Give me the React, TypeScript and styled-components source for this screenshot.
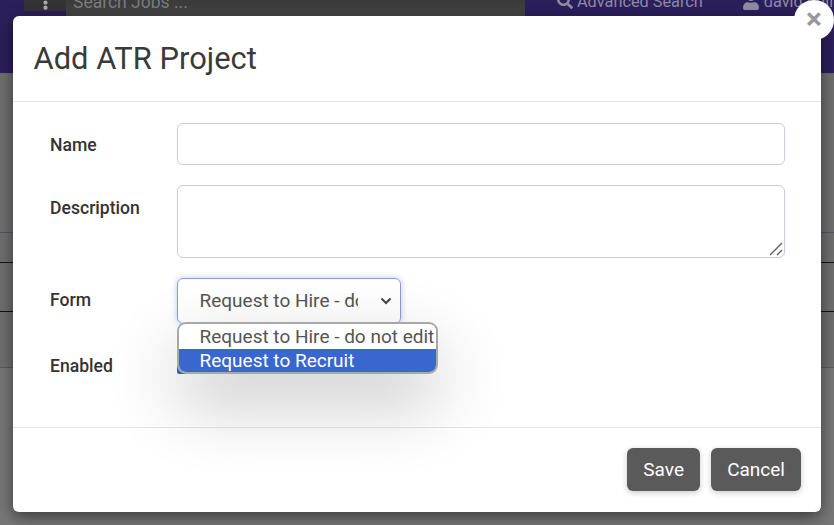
import styled, { createGlobalStyle } from 'styled-components';
import { FaSearch, FaUser, FaEllipsisV } from 'react-icons/fa';

const GlobalStyle = createGlobalStyle`
  html, body {
    margin: 0;
    padding: 0;
    height: 100%;
    overflow: hidden;
    font-family: Roboto, 'Liberation Sans', sans-serif;
  }
`;

function App() {
  return (
    <Page>
      <GlobalStyle />
      <TopBar>
        <MenuButton>
          <FaEllipsisV size={15} />
        </MenuButton>
        <SearchBox>Search Jobs ...</SearchBox>
        <TopLink>
          <FaSearch size={16} /> Advanced Search
        </TopLink>
        <TopLink>
          <FaUser size={18} /> david.bull
        </TopLink>
      </TopBar>
      <BackRows>
        <BackRow $height={159} $line="#55555f" />
        <BackRow $height={29} $line="#111" />
        <BackRow $height={48} $line="#111" />
        <BackRow $height={55} $line="#5a5a5a" />
      </BackRows>

      <Modal>
        <CloseButton>×</CloseButton>
        <ModalHeader>
          <Title>Add ATR Project</Title>
        </ModalHeader>
        <ModalBody>
          <FieldRow $height={42}>
            <FieldLabel $top={12}>Name</FieldLabel>
            <TextInput />
          </FieldRow>
          <FieldRow $height={73}>
            <FieldLabel $top={13}>Description</FieldLabel>
            <TextArea>
              <ResizeGrip viewBox="0 0 14 14">
                <path d="M1 13 L13 1 M8 13 L13 8" stroke="#5f5f5f" strokeWidth="1.4" fill="none" />
              </ResizeGrip>
            </TextArea>
          </FieldRow>
          <FieldRow $height={46}>
            <FieldLabel $top={12}>Form</FieldLabel>
            <SelectBox>
              <SelectValue>Request to Hire - do not edit</SelectValue>
              <Chevron viewBox="0 0 12 8">
                <path d="M1.5 1.5 L6 6 L10.5 1.5" stroke="#444" strokeWidth="2" fill="none" />
              </Chevron>
            </SelectBox>
          </FieldRow>
          <FieldRow $height={32}>
            <FieldLabel $top={12}>Enabled</FieldLabel>
            <CheckBox />
          </FieldRow>
        </ModalBody>
        <ModalFooter>
          <ActionButton>Save</ActionButton>
          <ActionButton>Cancel</ActionButton>
        </ModalFooter>
        <OptionList>
          <Option>Request to Hire - do not edit</Option>
          <Option $selected>Request to Recruit</Option>
        </OptionList>
      </Modal>
    </Page>
  );
}

export default App;

const Page = styled.div`
  position: relative;
  width: 834px;
  height: 525px;
  overflow: hidden;
  background: #777;
`;

const TopBar = styled.div`
  display: flex;
  align-items: flex-start;
  height: 73px;
  padding-left: 24px;
  box-sizing: border-box;
  background: #2a1f5a;
  color: #8f8aa6;
  font-size: 16.3px;
`;

const MenuButton = styled.div`
  display: flex;
  justify-content: center;
  width: 42px;
  height: 16px;
  margin-top: -5px;
  background: #333;
  color: #aaa;
`;

const SearchBox = styled.div`
  width: 452px;
  height: 16px;
  padding-left: 7px;
  background: linear-gradient(#3a3a3a, #444);
  color: #7c7c7c;
  line-height: 5px;
  font-size: 17.5px;
`;

const TopLink = styled.div`
  display: flex;
  align-items: center;
  gap: 4px;
  margin-left: 32px;
  margin-top: -8px;
  height: 18px;
  white-space: nowrap;
  &:last-child {
    margin-left: 39px;
  }
`;

const BackRows = styled.div`
  background: #6e6e6e;
`;

const BackRow = styled.div<{ $height: number; $line: string }>`
  height: ${(p) => p.$height}px;
  border-bottom: 1px solid ${(p) => p.$line};
  background: #6e6e6e;
`;

const Modal = styled.div`
  position: absolute;
  left: 13px;
  top: 16px;
  width: 808px;
  height: 496px;
  display: flex;
  flex-direction: column;
  background: #fff;
  border-radius: 6px;
  box-shadow: 0 5px 15px rgba(0, 0, 0, 0.5);
`;

const CloseButton = styled.div`
  position: absolute;
  right: -13px;
  top: -16px;
  width: 40px;
  height: 40px;
  border-radius: 50%;
  background: #fff;
  color: #999;
  font-size: 30px;
  font-weight: 700;
  line-height: 38px;
  text-align: center;
`;

const ModalHeader = styled.div`
  height: 86px;
  padding: 0 20.5px;
  box-sizing: border-box;
  border-bottom: 1px solid #e5e5e5;
`;

const Title = styled.h4`
  margin: 0;
  padding-top: 25px;
  color: #3a3a3a;
  font-size: 30.9px;
  font-weight: 400;
  line-height: 36px;
`;

const ModalBody = styled.div`
  flex: 1;
  display: flex;
  flex-direction: column;
  gap: 20px;
  padding: 21px 36px 0 37px;
`;

const FieldRow = styled.div<{ $height: number }>`
  display: flex;
  height: ${(p) => p.$height}px;
`;

const FieldLabel = styled.label<{ $top: number }>`
  width: 127px;
  padding-top: ${(p) => p.$top}px;
  color: #333;
  font-size: 17.6px;
  font-weight: 500;
  line-height: 20px;
`;

const TextInput = styled.div`
  flex: 1;
  box-sizing: border-box;
  border: 1px solid #c9c9e4;
  border-radius: 6px;
`;

const TextArea = styled(TextInput)`
  position: relative;
`;

const ResizeGrip = styled.svg`
  position: absolute;
  right: 1px;
  bottom: 1px;
  width: 14px;
  height: 14px;
`;

const SelectBox = styled.div`
  display: flex;
  align-items: center;
  width: 224px;
  height: 46px;
  box-sizing: border-box;
  padding: 0 8px 0 21.5px;
  border: 1px solid #8c9be0;
  border-radius: 6px;
  box-shadow: 0 0 6px rgba(90, 120, 230, 0.4);
`;

const SelectValue = styled.div`
  width: 158px;
  overflow: hidden;
  white-space: nowrap;
  color: #555;
  font-size: 19px;
  line-height: 22px;
`;

const Chevron = styled.svg`
  width: 12px;
  height: 8px;
  margin-left: auto;
`;

const CheckBox = styled.div`
  width: 17px;
  height: 18px;
  margin-top: 12px;
  background: #3a66d0;
  border-radius: 2px;
`;

const ModalFooter = styled.div`
  display: flex;
  justify-content: flex-end;
  gap: 11px;
  height: 85px;
  box-sizing: border-box;
  padding: 20px 20px 0;
  border-top: 1px solid #e5e5e5;
`;

const ActionButton = styled.button`
  min-width: 73px;
  height: 43px;
  padding: 0 16px;
  border: 0;
  border-radius: 6px;
  background: #5a5a5a;
  color: #fff;
  font-family: inherit;
  font-size: 19px;
  box-shadow: 0 2px 6px rgba(0, 0, 0, 0.2);
`;

const OptionList = styled.div`
  position: absolute;
  left: 164px;
  top: 306px;
  width: 261px;
  height: 52px;
  box-sizing: border-box;
  padding-top: 1px;
  overflow: hidden;
  background: #fff;
  border: 2px solid #a8a8a8;
  border-radius: 9px;
  box-shadow: 0 28px 70px rgba(0, 0, 0, 0.24);
`;

const Option = styled.div<{ $selected?: boolean }>`
  height: 24px;
  padding-left: 20.5px;
  background: ${(p) => (p.$selected ? '#3a66d0' : '#fff')};
  color: ${(p) => (p.$selected ? '#fff' : '#555')};
  font-size: 19px;
  line-height: 23px;
  white-space: nowrap;
`;
